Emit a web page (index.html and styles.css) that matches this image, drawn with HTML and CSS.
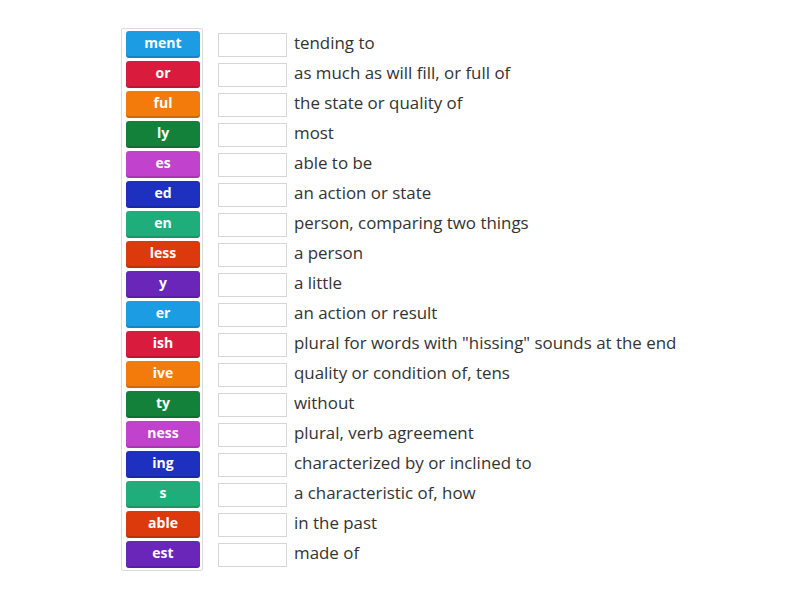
FILE: index.html
```html
<!DOCTYPE html>
<html>
<head>
<meta charset="utf-8">
<link rel="stylesheet" href="styles.css">
</head>
<body>
<div class="game">
  <div class="tiles">
    <div class="tile blue">ment</div>
    <div class="tile red">or</div>
    <div class="tile orange">ful</div>
    <div class="tile green">ly</div>
    <div class="tile pink">es</div>
    <div class="tile navy">ed</div>
    <div class="tile teal">en</div>
    <div class="tile rust">less</div>
    <div class="tile purple">y</div>
    <div class="tile blue">er</div>
    <div class="tile red">ish</div>
    <div class="tile orange">ive</div>
    <div class="tile green">ty</div>
    <div class="tile pink">ness</div>
    <div class="tile navy">ing</div>
    <div class="tile teal">s</div>
    <div class="tile rust">able</div>
    <div class="tile purple">est</div>
  </div>
  <div class="rows">
    <div class="row"><span class="slot"></span><span class="def">tending to</span></div>
    <div class="row"><span class="slot"></span><span class="def">as much as will fill, or full of</span></div>
    <div class="row"><span class="slot"></span><span class="def">the state or quality of</span></div>
    <div class="row"><span class="slot"></span><span class="def">most</span></div>
    <div class="row"><span class="slot"></span><span class="def">able to be</span></div>
    <div class="row"><span class="slot"></span><span class="def">an action or state</span></div>
    <div class="row"><span class="slot"></span><span class="def">person, comparing two things</span></div>
    <div class="row"><span class="slot"></span><span class="def">a person</span></div>
    <div class="row"><span class="slot"></span><span class="def">a little</span></div>
    <div class="row"><span class="slot"></span><span class="def">an action or result</span></div>
    <div class="row"><span class="slot"></span><span class="def">plural for words with "hissing" sounds at the end</span></div>
    <div class="row"><span class="slot"></span><span class="def">quality or condition of, tens</span></div>
    <div class="row"><span class="slot"></span><span class="def">without</span></div>
    <div class="row"><span class="slot"></span><span class="def">plural, verb agreement</span></div>
    <div class="row"><span class="slot"></span><span class="def">characterized by or inclined to</span></div>
    <div class="row"><span class="slot"></span><span class="def">a characteristic of, how</span></div>
    <div class="row"><span class="slot"></span><span class="def">in the past</span></div>
    <div class="row"><span class="slot"></span><span class="def">made of</span></div>
  </div>
</div>
</body>
</html>
```

FILE: styles.css
```css
html, body {
  margin: 0;
  padding: 0;
  background: #ffffff;
}
body {
  font-family: "Open Sans", "Liberation Sans", sans-serif;
}
.game {
  display: flex;
  align-items: flex-start;
  padding: 28px 0 0 121px;
}
.tiles {
  display: flex;
  flex-direction: column;
  gap: 3px;
  padding: 2px 2px 2px 4px;
  border: 1px solid #dcdcdc;
  border-radius: 2px;
}
.tile {
  width: 74px;
  height: 27px;
  border-radius: 3px;
  color: #ffffff;
  font-weight: 700;
  font-size: 14px;
  line-height: 24px;
  text-align: center;
  box-shadow: inset 0 -2px 0 rgba(0, 0, 0, 0.15);
  box-sizing: border-box;
}
.blue { background: #1c9ce3; }
.red { background: #d91c3d; }
.orange { background: #f27b0b; }
.green { background: #138139; }
.pink { background: #c142cc; }
.navy { background: #1d30c0; }
.teal { background: #1fae7b; }
.rust { background: #dc3a0d; }
.purple { background: #6a25b9; }
.rows {
  display: flex;
  flex-direction: column;
  gap: 3px;
  margin-left: 15px;
  padding-top: 3px;
}
.row {
  display: flex;
  align-items: center;
  height: 27px;
}
.slot {
  width: 69px;
  height: 24px;
  border: 1px solid #d6d6d6;
  box-sizing: border-box;
  flex: none;
}
.def {
  margin-left: 7px;
  margin-bottom: 4px;
  font-size: 16.9px;
  line-height: 22px;
  color: #333333;
  white-space: nowrap;
}
```
